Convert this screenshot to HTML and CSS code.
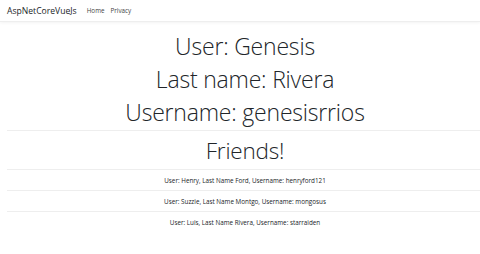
FILE: index.html
```html
<!DOCTYPE html>
<html lang="en">
<head>
  <meta charset="UTF-8" />
  <meta name="viewport" content="width=device-width, initial-scale=1.0" />
  <title>AspNetCoreVueJs</title>
  <link rel="stylesheet" href="styles.css">
</head>
<body>
  <header class="navbar">
    <a class="brand" href="#">AspNetCoreVueJs</a>
    <nav class="nav">
      <a href="#">Home</a>
      <a href="#">Privacy</a>
    </nav>
  </header>

  <main class="container">
    <div class="profile">
      <h1 class="display">User: Genesis</h1>
      <h1 class="display">Last name: Rivera</h1>
      <h1 class="display">Username: genesisrrios</h1>
    </div>
    <hr />
    <h2 class="display friends-title">Friends!</h2>
    <hr />
    <ul class="friends">
      <li>User: Henry, Last Name Ford, Username: henryford121</li>
      <li>User: Suzzie, Last Name Montgo, Username: mongosus</li>
      <li>User: Luis, Last Name Rivera, Username: starraiden</li>
    </ul>
  </main>
</body>
</html>
```

FILE: styles.css
```css
* { box-sizing: border-box; }
html, body { overflow-x: hidden; }
body {
  margin: 0;
  font-family: "Open Sans", "Liberation Sans", sans-serif;
  color: #212529;
  background: #fff;
}
.navbar {
  display: flex;
  align-items: center;
  height: 22px;
  padding: 0 7px;
  border-bottom: 1px solid #eee;
  box-shadow: 0 1px 3px rgba(0, 0, 0, 0.05);
}
.brand {
  font-size: 8.6px;
  color: #212529;
  text-decoration: none;
  margin-right: 10px;
}
.nav {
  display: flex;
  gap: 6px;
}
.nav a {
  font-size: 6.3px;
  color: #444;
  text-decoration: none;
}
.container {
  margin-left: 7px;
  width: 476px;
  padding-top: 8px;
}
.display {
  margin: 0;
  font-weight: 300;
  font-size: 23px;
  line-height: 33px;
  text-align: center;
  letter-spacing: -0.2px;
}
hr {
  margin: 0;
  border: 0;
  border-top: 1px solid #eee;
}
.profile {
  padding-bottom: 1px;
}
.friends-title {
  font-size: 22.5px;
  line-height: 38px;
  padding-top: 2px;
  line-height: 36px;
}
.friends {
  list-style: none;
  margin: 0;
  padding: 0;
}
.friends li {
  font-size: 6.3px;
  line-height: 19px;
  padding-top: 1px;
  text-align: center;
  border-bottom: 1px solid #eee;
}
.friends li:last-child {
  border-bottom: 0;
}
```
